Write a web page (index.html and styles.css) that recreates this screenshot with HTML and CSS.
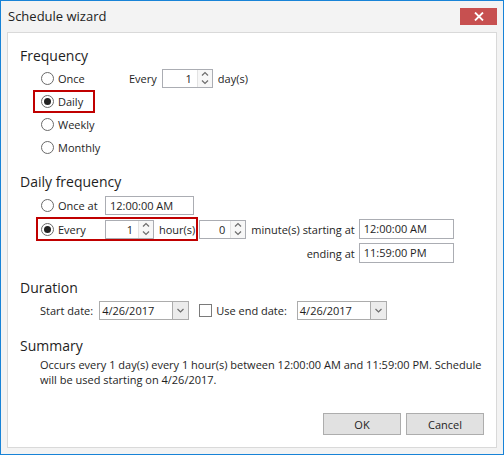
FILE: index.html
```html
<!DOCTYPE html>
<html lang="en">
<head>
  <meta charset="UTF-8" />
  <title>Schedule wizard</title>
  <link rel="stylesheet" href="styles.css">
</head>
<body>

  <div class="window">
    <div class="titlebar">
      <span class="title">Schedule wizard</span>
      <span class="close">
        <svg width="10" height="9" viewBox="0 0 10 9"><path d="M1 0.5 L9 8.5 M9 0.5 L1 8.5" /></svg>
      </span>
    </div>

    <div class="panel">

      <!-- Frequency -->
      <section class="group group--first">
        <h2>Frequency</h2>
        <div class="freq">
          <div class="options">
            <label class="opt"><span class="radio"></span>Once</label>
            <label class="opt opt--marked"><span class="radio checked"></span>Daily</label>
            <label class="opt"><span class="radio"></span>Weekly</label>
            <label class="opt"><span class="radio"></span>Monthly</label>
          </div>
          <div class="every-days">
            <span>Every</span>
            <span class="spin spin--day">
              <span class="spin-value">1</span>
              <span class="spin-arrows">
                <svg width="14" height="17" viewBox="0 0 14 17"><path d="M4 5.5 L7 2.5 L10 5.5 M4 10.5 L7 13.5 L10 10.5" /></svg>
              </span>
            </span>
            <span>day(s)</span>
          </div>
        </div>
      </section>

      <!-- Daily frequency -->
      <section class="group group--daily">
        <h2>Daily frequency</h2>
        <div class="daily">
          <label class="opt opt--daily">
            <span class="radio"></span><span class="opt-text">Once at</span>
            <span class="field field--once">12:00:00 AM</span>
          </label>

          <div class="daily-grid">
            <label class="opt opt--daily opt--marked">
              <span class="radio checked"></span><span class="opt-text">Every</span>
              <span class="spin spin--hour">
                <span class="spin-value">1</span>
                <span class="spin-arrows">
                  <svg width="14" height="17" viewBox="0 0 14 17"><path d="M4 5.5 L7 2.5 L10 5.5 M4 10.5 L7 13.5 L10 10.5" /></svg>
                </span>
              </span>
              <span class="unit">hour(s)</span>
            </label>
            <span class="spin spin--minute">
              <span class="spin-value">0</span>
              <span class="spin-arrows">
                <svg width="14" height="17" viewBox="0 0 14 17"><path d="M4 5.5 L7 2.5 L10 5.5 M4 10.5 L7 13.5 L10 10.5" /></svg>
              </span>
            </span>
            <span class="unit-minute">minute(s)</span>
            <span class="at-label">starting at</span>
            <span class="field field--time">12:00:00 AM</span>

            <span class="at-label at-label--end">ending at</span>
            <span class="field field--time">11:59:00 PM</span>
          </div>
        </div>
      </section>

      <!-- Duration -->
      <section class="group group--duration">
        <h2>Duration</h2>
        <div class="duration">
          <span>Start date:</span>
          <span class="combo">
            <span class="combo-value">4/26/2017</span>
            <span class="combo-arrow">
              <svg width="15" height="17" viewBox="0 0 15 17"><path d="M4.5 7 L7.5 10 L10.5 7" /></svg>
            </span>
          </span>
          <label class="check"><span class="checkbox"></span>Use end date:</label>
          <span class="combo">
            <span class="combo-value">4/26/2017</span>
            <span class="combo-arrow">
              <svg width="15" height="17" viewBox="0 0 15 17"><path d="M4.5 7 L7.5 10 L10.5 7" /></svg>
            </span>
          </span>
        </div>
      </section>

      <!-- Summary -->
      <section class="group group--summary">
        <h2>Summary</h2>
        <p class="summary">Occurs every 1 day(s) every 1 hour(s) between 12:00:00 AM and 11:59:00 PM. Schedule will be used starting on 4/26/2017.</p>
      </section>

      <div class="actions">
        <button class="btn">OK</button>
        <button class="btn">Cancel</button>
      </div>

    </div>
  </div>

</body>
</html>
```

FILE: styles.css
```css
body {
  margin: 0;
  font-family: "Open Sans", "Noto Sans", sans-serif;
  font-size: 11px;
  color: #1e1e1e;
}

.window {
  width: 504px;
  height: 455px;
  box-sizing: border-box;
  border: 1px solid #1883d7;
  background: #f3f3f3;
  display: flex;
  flex-direction: column;
}

/* title bar */
.titlebar {
  height: 31px;
  flex: none;
  display: flex;
  justify-content: space-between;
  align-items: flex-start;
  padding: 0 6px 0 7px;
}

.title {
  font-size: 13px;
  line-height: 18px;
  margin-top: 6px;
  color: #222;
}

.close {
  width: 37px;
  height: 17px;
  margin-top: 7px;
  background: #c75050;
  display: flex;
  align-items: center;
  justify-content: center;
}

.close svg path {
  stroke: #fff;
  stroke-width: 1.8;
  fill: none;
}

/* main white panel */
.panel {
  flex: 1;
  margin: 0 6px 6px;
  background: #fff;
  border: 1px solid #d9d9d9;
  padding: 13px 12px 12px;
  display: flex;
  flex-direction: column;
}

.group--daily {
  margin-top: 13px;
}

.group--duration {
  margin-top: 13px;
}

.group--summary {
  margin-top: 14px;
}

h2 {
  margin: 0 0 1px;
  font-size: 14px;
  font-weight: normal;
  line-height: 20px;
  color: #1e1e1e;
}

/* radio rows */
.opt {
  display: flex;
  align-items: center;
  height: 23px;
  box-sizing: border-box;
  border: 2px solid transparent;
  padding-left: 6px;
}

.opt--marked {
  border-color: #c00000;
}

.radio {
  width: 13px;
  height: 13px;
  box-sizing: border-box;
  border: 1px solid #6a6a6a;
  border-radius: 50%;
  margin-right: 4px;
  display: flex;
  align-items: center;
  justify-content: center;
  flex: none;
}

.radio.checked::after {
  content: "";
  width: 7px;
  height: 7px;
  border-radius: 50%;
  background: #222;
}

/* frequency block */
.freq {
  display: flex;
  align-items: flex-start;
}

.options {
  margin-left: 13px;
  width: 96px;
}

.options .opt--marked {
  width: 62px;
}

.every-days {
  display: flex;
  align-items: center;
  height: 23px;
  gap: 5px;
}

/* inputs */
.spin {
  display: flex;
  height: 19px;
  box-sizing: border-box;
  border: 1px solid #abadb3;
  background: #fff;
}

.spin--day {
  width: 51px;
}

.spin--hour {
  width: 49px;
}

.spin--minute {
  width: 47px;
}

.spin-value {
  flex: 1;
  text-align: right;
  padding-right: 5px;
  line-height: 17px;
}

.spin-arrows {
  width: 14px;
  border-left: 1px solid #e3e3e3;
  background: #f7f7f7;
}

.spin-arrows svg,
.combo-arrow svg {
  display: block;
}

.spin-arrows path,
.combo-arrow path {
  stroke: #6d6d6d;
  stroke-width: 1.2;
  fill: none;
}

.field {
  height: 19px;
  box-sizing: border-box;
  border: 1px solid #abadb3;
  padding-left: 4px;
  line-height: 17px;
  background: #fff;
}

.field--once {
  width: 89px;
}

.field--time {
  width: 95px;
  height: 20px;
  line-height: 18px;
}

/* daily frequency block */
.daily {
  margin-left: 16px;
  padding-top: 1px;
}

.opt--daily {
  padding-left: 3px;
}

.opt-text {
  width: 47px;
}

.daily-grid {
  display: grid;
  grid-template-columns: auto auto auto auto auto;
  grid-auto-rows: 24px;
  align-items: center;
  justify-content: start;
}

.daily-grid .opt {
  height: 24px;
  padding-right: 1px;
}

.unit {
  margin-left: 5px;
}

.spin--minute {
  margin-left: 1px;
}

.unit-minute {
  margin-left: 5px;
}

.at-label {
  margin-left: 3px;
  margin-right: 4px;
  justify-self: end;
}

.at-label--end {
  grid-column: 4;
}

/* duration */
.duration {
  display: flex;
  align-items: center;
  height: 23px;
  margin-left: 20px;
}

.combo {
  display: flex;
  width: 90px;
  height: 19px;
  box-sizing: border-box;
  border: 1px solid #acacac;
  margin-left: 6px;
  background: #fff;
}

.combo-value {
  flex: 1;
  padding-left: 2px;
  line-height: 17px;
}

.combo-arrow {
  width: 15px;
  border-left: 1px solid #acacac;
  background: #ececec;
}

.check {
  display: flex;
  align-items: center;
  margin-left: 10px;
  margin-right: 4px;
}

.checkbox {
  width: 13px;
  height: 13px;
  box-sizing: border-box;
  border: 1px solid #7a7a7a;
  margin-right: 4px;
}

/* summary */
.summary {
  margin: 1px -8px 0 20px;
  line-height: 15px;
}

/* buttons */
.actions {
  margin-top: auto;
  display: flex;
  justify-content: flex-end;
  gap: 5px;
}

.btn {
  width: 78px;
  height: 22px;
  font-family: inherit;
  font-size: 11px;
  color: #1e1e1e;
  background: #e1e1e1;
  border: 1px solid #adadad;
  padding: 0;
}
```
